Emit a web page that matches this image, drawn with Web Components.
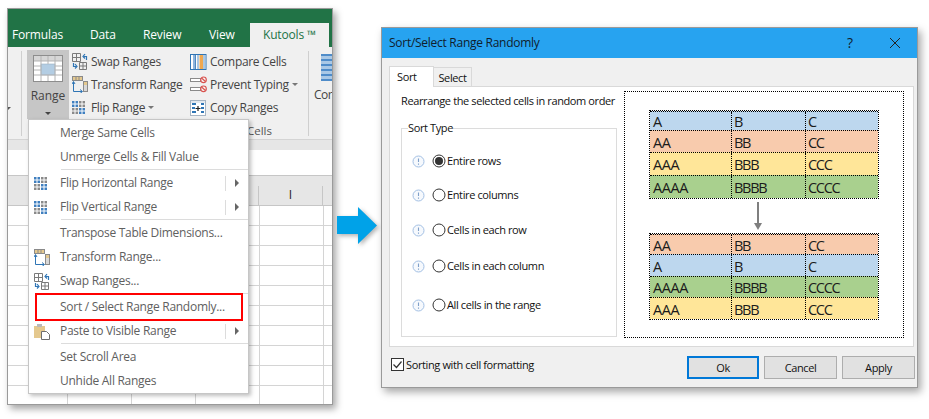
<!DOCTYPE html>
<html>
<head>
<meta charset="utf-8">
<title>Sort/Select Range Randomly</title>
<style>
  html, body { margin:0; padding:0; background:#fff; }
  body { width:929px; height:419px; overflow:hidden; position:relative; font-family:"Open Sans", "Liberation Sans", sans-serif; }
</style>
</head>
<body>
  <x-excel></x-excel>

  <x-menu>
    <x-menu-item>Merge Same Cells</x-menu-item>
    <x-menu-item divider>Unmerge Cells &amp; Fill Value</x-menu-item>
    <x-menu-item icon="flip" sub>Flip Horizontal Range</x-menu-item>
    <x-menu-item icon="flip" sub divider>Flip Vertical Range</x-menu-item>
    <x-menu-item>Transpose Table Dimensions...</x-menu-item>
    <x-menu-item icon="transform">Transform Range...</x-menu-item>
    <x-menu-item icon="swap" divider>Swap Ranges...</x-menu-item>
    <x-menu-item marked>Sort / Select Range Randomly...</x-menu-item>
    <x-menu-item icon="paste" sub divider>Paste to Visible Range</x-menu-item>
    <x-menu-item>Set Scroll Area</x-menu-item>
    <x-menu-item>Unhide All Ranges</x-menu-item>
  </x-menu>

  <x-big-arrow></x-big-arrow>

  <x-dialog>
    <x-radio checked style="margin-top:15px">Entire rows</x-radio>
    <x-radio style="margin-top:14px">Entire columns</x-radio>
    <x-radio style="margin-top:15px">Cells in each row</x-radio>
    <x-radio style="margin-top:16px">Cells in each column</x-radio>
    <x-radio style="margin-top:19px">All cells in the range</x-radio>

    <x-sample slot="preview" rows="blue:1:19,orange:2:22,yellow:3:23,green:4:23"></x-sample>
    <x-down-arrow slot="preview"></x-down-arrow>
    <x-sample slot="preview" rows="orange:2:20,blue:1:22,green:4:21,yellow:3:22"></x-sample>
  </x-dialog>

<script>
const icons = {
  swap: `<svg width="16" height="17" viewBox="0 0 16 17"><g fill="none" stroke="#7a7a7a"><path d="M.5.5h8v8h-8zM4.500.5v8M.5 4.500h8M7.500 9.500h7v7h-7zM11 9.500v7M7.500 13h7"/></g><g fill="none" stroke="#2f75b5" stroke-width="1.200"><path d="M14.500 7V3.500h-3"/><path d="M13 1l-2 2.500 2 2"/><path d="M1.500 10v3.500h3"/><path d="M3 11l2 2.500-2 2"/></g></svg>`,
  transform: `<svg width="16" height="17" viewBox="0 0 16 17"><rect x=".5" y=".5" width="10" height="4" fill="#e4c88e" stroke="#8a8a8a"/><path d="M4 1v3M7 1v3" stroke="#8a8a8a"/><rect x="11.500" y="5.500" width="4" height="10" fill="#d8d8d8" stroke="#8a8a8a"/><rect x="12" y="6" width="3" height="3" fill="#e4c88e"/><path d="M1.500 6v9.500H10M0 8l1.500-2.500L3 8M8 13.500l2.500 2L8 17.500" fill="none" stroke="#2f75b5"/></svg>`,
  flip: `<svg width="16" height="13" viewBox="0 0 16 13"><path fill="#3f7fbf" d="M0 0h6v6H0zM7 7h6v6H7z"/><path fill="#8a8a8a" d="M7 0h6v6H7zM0 7h6v6H0z"/><path stroke="#fff" stroke-width="1" d="M3 0v6M0 3h6M10 7v6M7 10h6M10 0v6M7 3h6M3 7v6M0 10h6"/></svg>`,
  paste: `<svg width="16" height="17" viewBox="0 0 16 17"><path d="M0 3h3V1h5v2h3v12H0z" fill="#e4c88e"/><rect x="3" y="1" width="5" height="3" fill="#b9b9b9"/><path d="M7.500 8.500h5l3 3v5h-8z" fill="#fff" stroke="#6e6e6e"/></svg>`,
  compare: `<svg width="17" height="16" viewBox="0 0 17 16"><rect x=".5" y=".5" width="15.500" height="15" fill="#fff" stroke="#2f75b5"/><rect x="3" y="1" width="2.500" height="14" fill="#8fb4dc"/><rect x="9.500" y="1" width="3.500" height="14" fill="#f0a850"/><path d="M5.500 1v14M8 1v14M14 1v14" stroke="#2f75b5" stroke-width=".8"/></svg>`,
  prevent: `<svg width="17" height="17" viewBox="0 0 17 17"><rect x=".5" y="2.500" width="10" height="3" fill="#fff" stroke="#8a8a8a"/><rect x=".5" y="11.500" width="10" height="3" fill="#fff" stroke="#8a8a8a"/><g fill="#f6f6f6" stroke="#d9534f" stroke-width="1.200"><circle cx="13.500" cy="3.800" r="2.800"/><path d="M11.500 2l4 3.500"/><circle cx="13.500" cy="12.800" r="2.800"/><path d="M11.500 11l4 3.500"/></g></svg>`,
  copy: `<svg width="17" height="16" viewBox="0 0 17 16"><rect x=".5" y=".5" width="15" height="15" fill="#fff" stroke="#a7b4c2"/><path d="M1 2h14" stroke="#c9d3dd"/><path d="M2 4h4M2 8h3M2 12h4M11 4h3M11 8h3M11 12h3" stroke="#2f75b5" stroke-width="2"/><path d="M8 6v5M5.500 8.500h5" stroke="#222" stroke-width="1.200"/></svg>`,
  range: `<svg width="30" height="27" viewBox="0 0 30 27"><rect x=".5" y=".5" width="29" height="26" fill="#fff" stroke="#8d8d8d"/><rect x="1" y="1" width="28" height="5" fill="#d6d6d6"/><rect x="8" y="9" width="14" height="11" fill="#b3cde3" stroke="#9ab0c4" stroke-width=".6"/><path d="M1 6h28M1 11h7M22 11h7M1 15h7M22 15h7M1 20h28M8 1v25M15 1v8M15 20v6M22 1v25" stroke="#b4b4b4" stroke-width="1" fill="none"/></svg>`
};

const tplExcel = document.createElement('template');
tplExcel.innerHTML = `
  <style>
  :host { position:absolute; left:7px; top:8px; width:326px; height:397px; box-sizing:border-box; display:flex; flex-direction:column; border:1px solid #9a9a9a; box-shadow:3px 4px 7px rgba(0,0,0,.35); overflow:hidden; background:#fff; font:12px "Open Sans", sans-serif; color:#444; }
  .tabs { height:38px; flex:none; background:#217346; display:flex; align-items:flex-end; padding-left:4px; color:#fff; letter-spacing:-.15px; }
  .tab { height:24px; line-height:23px; text-align:center; flex:none; white-space:nowrap; }
  .tab.on { background:#f0f0f0; color:#217346; width:79px; }
  .ribbon { height:92px; flex:none; background:#f0f0f0; border-bottom:1px solid #d4d4d4; display:flex; overflow:hidden; box-sizing:content-box; }
  .stub { width:13px; height:85px; margin-top:4px; border-right:1px solid #cfcfcf; flex:none; overflow:hidden; }
  .stub i { display:block; margin:56px 0 0 -3px; width:0; height:0; border-top:3px solid #555; border-left:3px solid transparent; border-right:3px solid transparent; }
  .range { width:42px; height:69px; margin:3px 0 0 5px; background:#c6c6c6; flex:none; display:flex; flex-direction:column; align-items:center; padding-top:5px; box-sizing:border-box; }
  .range span { margin-top:5px; line-height:18px; }
  .range i { margin-top:7px; width:0; height:0; border-top:3px solid #444; border-left:3px solid transparent; border-right:3px solid transparent; }
  .col { width:118px; flex:none; padding-top:3px; box-sizing:border-box; }
  .col.first { margin-left:3px; }
  .rb { height:23px; display:flex; align-items:center; gap:3px; white-space:nowrap; letter-spacing:-.33px; }
  .rb svg { flex:none; }
  .rb b { width:0; height:0; border-top:3px solid #777; border-left:3px solid transparent; border-right:3px solid transparent; }
  .cells { text-align:right; padding-right:36px; line-height:14px; margin-top:5px; font-size:11.500px; color:#555; }
  .last { flex:1; border-left:1px solid #cfcfcf; height:85px; margin-top:4px; padding-left:5px; white-space:nowrap; letter-spacing:-.5px; }
  .last .ico { margin:3px 0 0 7px; width:11px; height:27px; background:repeating-linear-gradient(#4f8cc9 0 2px,#a9c8e6 2px 5px); }
  .last span { display:block; margin-top:5px; line-height:18px; }
  .strip { height:10px; flex:none; background:#e6e6e6; }
  .formula { height:25px; flex:none; border-bottom:1px solid #c6c6c6; }
  .head { height:29px; flex:none; background:#e6e6e6; display:flex; align-items:flex-end; }
  .head div { height:19px; width:63px; flex:none; border-right:1px solid #c6c6c6; text-align:center; line-height:18px; color:#222; }
  .head div:first-child { width:58px; }
  .grid { flex:1; border-top:1px solid #c6c6c6; background:
      linear-gradient(to right, transparent 63px, #d4d4d4 63px) -4px 0 / 64px 100%,
      linear-gradient(to bottom, transparent 19px, #d4d4d4 19px) 0 0 / 100% 20px; }
  </style>
  <div class="tabs">
    <div class="tab" style="width:49px">Formulas</div>
    <div class="tab" style="width:24px;margin-left:29px">Data</div>
    <div class="tab" style="width:37px;margin-left:29px">Review</div>
    <div class="tab" style="width:25px;margin-left:29px">View</div>
    <div class="tab on" style="margin-left:16px">Kutools ™</div>
  </div>
  <div class="ribbon">
    <div class="stub"><i></i></div>
    <div class="range">${icons.range}<span>Range</span><i></i></div>
    <div class="col first">
      <div class="rb">${icons.swap}<span>Swap Ranges</span></div>
      <div class="rb">${icons.transform}<span>Transform Range</span></div>
      <div class="rb">${icons.flip}<span>Flip Range</span><b></b></div>
    </div>
    <div class="col">
      <div class="rb">${icons.compare}<span>Compare Cells</span></div>
      <div class="rb">${icons.prevent}<span>Prevent Typing</span><b></b></div>
      <div class="rb">${icons.copy}<span>Copy Ranges</span></div>
      <div class="cells">Cells</div>
    </div>
    <div class="last"><div class="ico"></div><span>Cor</span></div>
  </div>
  <div class="strip"></div>
  <div class="formula"></div>
  <div class="head"><div></div><div></div><div></div><div></div><div>I</div><div></div></div>
  <div class="grid"></div>
`;
class XExcel extends HTMLElement {
  constructor() {
    super();
    this.attachShadow({mode:'open'});
    this.shadowRoot.appendChild(tplExcel.content.cloneNode(true));
  }
}
customElements.define('x-excel', XExcel);

const tplMenu = document.createElement('template');
tplMenu.innerHTML = `
  <style>
  :host { position:absolute; left:28px; top:119px; width:221px; height:275px; box-sizing:border-box; display:block; padding:1px 0 0; background:#fff; border:1px solid #c6c6c6; box-shadow:2px 2px 4px rgba(0,0,0,.25); font:12px "Open Sans", sans-serif; color:#606060; letter-spacing:-.27px; }
  </style>
  <slot></slot>
`;
class XMenu extends HTMLElement {
  constructor() {
    super();
    this.attachShadow({mode:'open'});
    this.shadowRoot.appendChild(tplMenu.content.cloneNode(true));
  }
}
customElements.define('x-menu', XMenu);

const tplItem = document.createElement('template');
tplItem.innerHTML = `
  <style>
  :host { display:block; position:relative; }
  .row { height:24px; display:flex; align-items:center; white-space:nowrap; }
  .ico { width:31px; flex:none; padding-left:5px; box-sizing:border-box; display:flex; }
  .txt { flex:1; padding-bottom:2px; }
  .sub { width:23px; height:15px; flex:none; border-left:1px solid #dcdcdc; box-sizing:border-box; position:relative; }
  .sub::after { content:""; position:absolute; left:9px; top:3px; border-left:4px solid #666; border-top:4px solid transparent; border-bottom:4px solid transparent; }
  .div { height:1px; margin:0 0 1px 32px; background:#dcdcdc; }
  .mark { position:absolute; left:6px; top:-2px; width:208px; height:28px; box-sizing:border-box; border:2px solid #f00; pointer-events:none; }
  </style>
  <div class="row"><div class="ico"></div><div class="txt"><slot></slot></div></div>
`;
class XMenuItem extends HTMLElement {
  constructor() {
    super();
    this.attachShadow({mode:'open'});
    this.shadowRoot.appendChild(tplItem.content.cloneNode(true));
  }
  connectedCallback() {
    const root = this.shadowRoot;
    const icon = this.getAttribute('icon');
    if (icon) root.querySelector('.ico').innerHTML = icons[icon];
    if (this.hasAttribute('sub')) {
      const s = document.createElement('div');
      s.className = 'sub';
      root.querySelector('.row').appendChild(s);
    }
    if (this.hasAttribute('divider')) {
      const d = document.createElement('div');
      d.className = 'div';
      root.appendChild(d);
    }
    if (this.hasAttribute('marked')) {
      const m = document.createElement('div');
      m.className = 'mark';
      root.appendChild(m);
    }
  }
}
customElements.define('x-menu-item', XMenuItem);

class XBigArrow extends HTMLElement {
  constructor() {
    super();
    this.attachShadow({mode:'open'});
    this.shadowRoot.innerHTML = `
      <style>
      :host { position:absolute; left:337px; top:207px; display:block; width:40px; height:37px; filter:drop-shadow(2px 2px 2px rgba(0,0,0,.3)); }
      svg { display:block; }
      </style>
      <svg width="40" height="37" viewBox="0 0 40 37"><path d="M0 9h21V0l19 18.500L21 37V27H0z" fill="#00a2e8"/></svg>`;
  }
}
customElements.define('x-big-arrow', XBigArrow);

const tplDialog = document.createElement('template');
tplDialog.innerHTML = `
  <style>
  :host { position:absolute; left:381px; top:27px; width:537px; height:361px; box-sizing:border-box; display:flex; flex-direction:column; border:1px solid #9a9a9a; box-shadow:3px 4px 8px rgba(0,0,0,.35); background:#f0f0f0; font:11px "Open Sans", sans-serif; letter-spacing:-.38px; color:#111; }
  .title { height:30px; flex:none; box-sizing:border-box; padding:0 0 1px 7px; background:#27a3f0; display:flex; align-items:center; font-size:12px; letter-spacing:-.27px; color:#10202c; }
  .title span { flex:1; }
  .title b { font-weight:400; width:14px; text-align:center; font-size:14px; }
  .title svg { margin:0 17px 0 33px; }
  .tabs { height:28px; flex:none; display:flex; align-items:flex-end; padding-left:7px; position:relative; z-index:1; }
  .tab { box-sizing:border-box; border:1px solid #d9d9d9; }
  .tab.on { width:45px; height:21px; padding-left:7px; background:#fff; border-bottom:0; margin-bottom:-1px; line-height:20px; }
  .tab.off { width:38px; height:19px; border-left:0; border-bottom:0; line-height:20px; text-align:center; }
  .panel { height:261px; flex:none; margin:0 3px 0 7px; background:#fff; border:1px solid #d9d9d9; box-sizing:border-box; display:flex; padding:4px 0 0 11px; }
  .left { width:216px; flex:none; }
  .intro { line-height:20px; white-space:nowrap; }
  fieldset { margin:9px 0 0; padding:0 0 0 10px; height:217px; box-sizing:border-box; border:1px solid #dcdcdc; }
  legend { padding:0; margin-left:-4px; line-height:16px; }
  .frame { margin-left:7px; width:280px; height:247px; box-sizing:border-box; border:1px dotted #000; padding:18px 0 0 24px; }
  .foot { flex:1; display:flex; padding:9px 2px 0 9px; }
  .check { display:flex; align-items:flex-start; gap:2px; margin-top:2px; line-height:14px; white-space:nowrap; }
  .check svg { flex:none; }
  .btns { margin-left:auto; display:flex; gap:5px; }
  .btn { width:73px; height:23px; box-sizing:border-box; border:1px solid #adadad; background:#e1e1e1; text-align:center; line-height:21px; color:#111; }
  .btn.def { width:72px; border:2px solid #0078d7; line-height:19px; }
  </style>
  <div class="title"><span>Sort/Select Range Randomly</span><b>?</b><svg width="10" height="10" viewBox="0 0 10 10"><path d="M0 0l10 10M10 0L0 10" stroke="#222" stroke-width="1" fill="none"/></svg></div>
  <div class="tabs"><div class="tab on">Sort</div><div class="tab off">Select</div></div>
  <div class="panel">
    <div class="left">
      <div class="intro">Rearrange the selected cells in random order</div>
      <fieldset><legend>Sort Type</legend><slot></slot></fieldset>
    </div>
    <div class="frame"><slot name="preview"></slot></div>
  </div>
  <div class="foot">
    <div class="check"><svg width="13" height="13" viewBox="0 0 13 13"><rect x=".5" y=".5" width="12" height="12" fill="#fff" stroke="#333"/><path d="M2.500 6.500l3 3 5-6" fill="none" stroke="#333" stroke-width="1.200"/></svg><span>Sorting with cell formatting</span></div>
    <div class="btns"><div class="btn def">Ok</div><div class="btn">Cancel</div><div class="btn">Apply</div></div>
  </div>
`;
class XDialog extends HTMLElement {
  constructor() {
    super();
    this.attachShadow({mode:'open'});
    this.shadowRoot.appendChild(tplDialog.content.cloneNode(true));
  }
}
customElements.define('x-dialog', XDialog);

const tplRadio = document.createElement('template');
tplRadio.innerHTML = `
  <style>
  :host { display:flex; height:20px; align-items:center; white-space:nowrap; }
  svg { flex:none; display:block; }
  .info { margin-right:7px; }
  .dot { margin-right:1px; }
  span { padding-bottom:2px; }
  </style>
  <svg class="info" width="13" height="13" viewBox="0 0 13 13"><circle cx="6.500" cy="6.500" r="5.500" fill="#f6f9fd" stroke="#a3c0e4"/><path d="M6.500 3.500v3.500M6.500 8.500v1.200" stroke="#7f9fc9" stroke-width="1.100"/></svg>
  <svg class="dot" width="14" height="14" viewBox="0 0 14 14"><circle cx="7" cy="7" r="6" fill="#fff" stroke="#333"/><circle class="in" cx="7" cy="7" r="4" fill="#333"/></svg>
  <span><slot></slot></span>
`;
class XRadio extends HTMLElement {
  constructor() {
    super();
    this.attachShadow({mode:'open'});
    this.shadowRoot.appendChild(tplRadio.content.cloneNode(true));
  }
  connectedCallback() {
    if (!this.hasAttribute('checked')) this.shadowRoot.querySelector('.in').remove();
  }
}
customElements.define('x-radio', XRadio);

const colors = { blue:'#bdd7ee', orange:'#f8cbad', yellow:'#ffe699', green:'#a9d08e' };

class XSample extends HTMLElement {
  constructor() {
    super();
    this.attachShadow({mode:'open'});
  }
  connectedCallback() {
    const rows = this.getAttribute('rows').split(',').map(r => {
      const [color, n, h] = r.split(':');
      return `<div class="r" style="background:${colors[color]};height:${h}px">
        <div class="c" style="width:81px">${'A'.repeat(n)}</div>
        <div class="c b" style="width:74px">${'B'.repeat(n)}</div>
        <div class="c b">${'C'.repeat(n)}</div></div>`;
    }).join('');
    this.shadowRoot.innerHTML = `
      <style>
      :host { display:block; width:230px; box-sizing:border-box; border:1px dotted #000; font:14.500px "Open Sans", sans-serif; color:#1b1b1b; }
      .r { display:flex; box-sizing:border-box; border-top:1px dotted #000; }
      .r:first-child { border-top:0; }
      .c { box-sizing:border-box; padding:1px 0 0 3px; border-left:1px dotted #000; display:flex; align-items:center; overflow:hidden; }
      .c:first-child { border-left:0; padding-left:3px; }
      .c.b { padding-left:2px; letter-spacing:-1.300px; }
      .c:last-child { flex:1; }
      </style>${rows}`;
  }
}
customElements.define('x-sample', XSample);

class XDownArrow extends HTMLElement {
  constructor() {
    super();
    this.attachShadow({mode:'open'});
    this.shadowRoot.innerHTML = `
      <style>
      :host { display:block; height:34px; padding:3px 0 0 105px; box-sizing:border-box; }
      svg { display:block; }
      </style>
      <svg width="8" height="29" viewBox="0 0 8 29"><path d="M4 0v22" stroke="#7f7f7f" stroke-width="2"/><path d="M0 21h8l-4 7z" fill="#7f7f7f"/></svg>`;
  }
}
customElements.define('x-down-arrow', XDownArrow);
</script>
</body>
</html>
